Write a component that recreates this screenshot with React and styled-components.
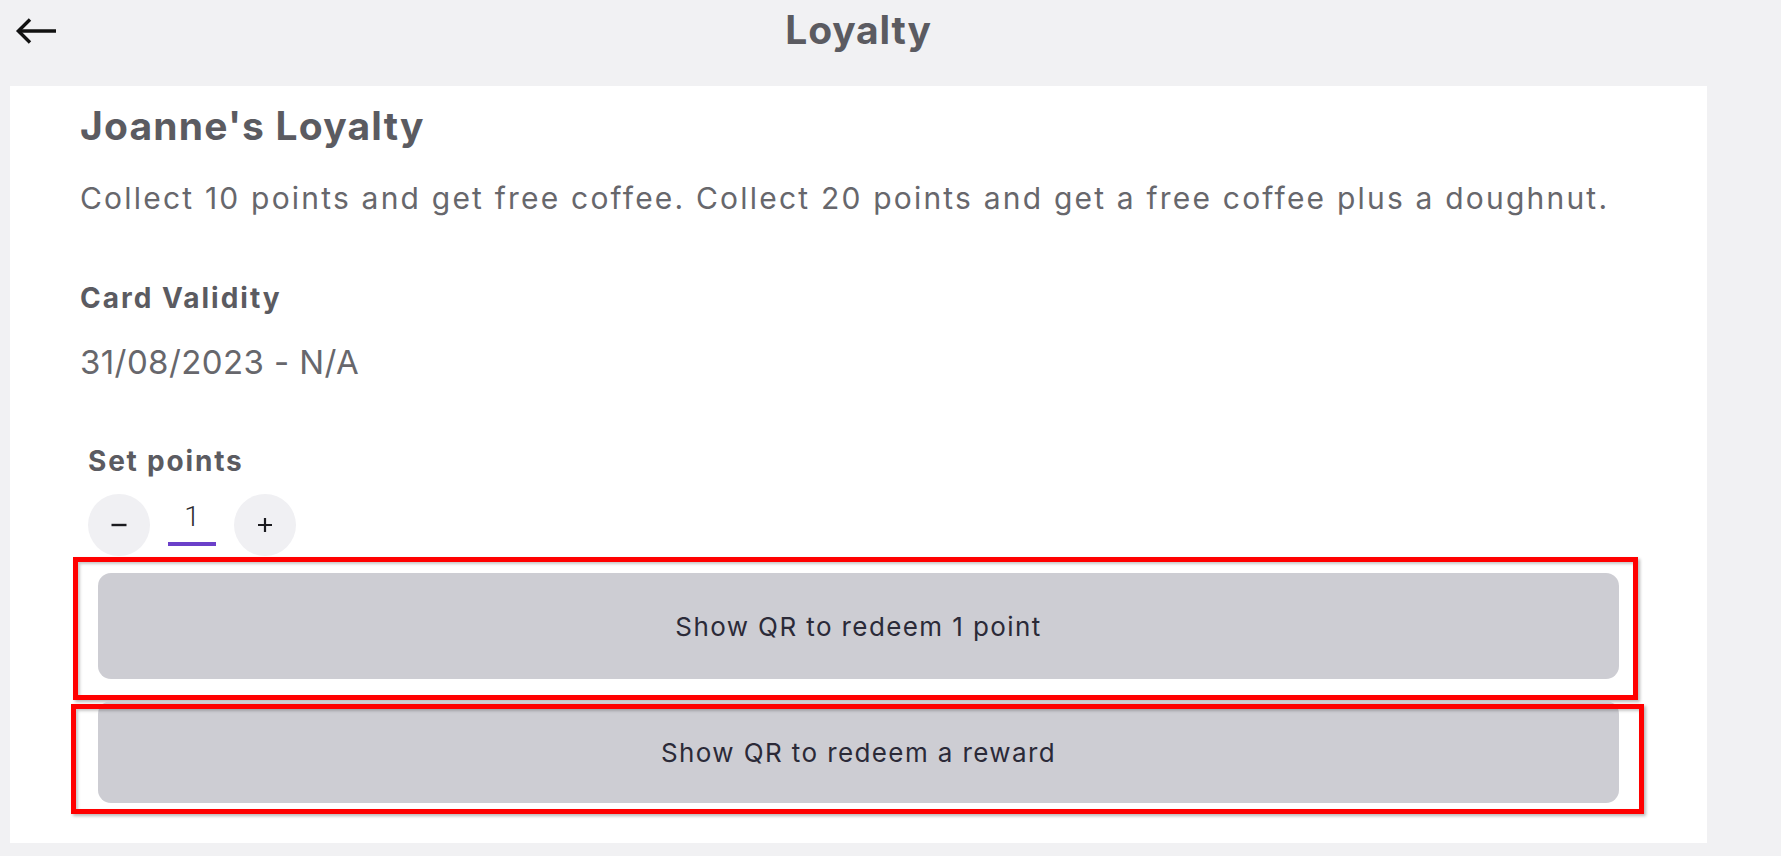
import React, { useState } from 'react';
import styled, { createGlobalStyle } from 'styled-components';

const GlobalStyle = createGlobalStyle`
  html, body {
    margin: 0;
    padding: 0;
    background: #f1f1f3;
  }
  body {
    font-family: Inter, "Noto Sans", Arial, sans-serif;
    -webkit-font-smoothing: antialiased;
  }
`;

const Page = styled.div`
  width: 1717px;
  height: 856px;
  display: flex;
  flex-direction: column;
`;

const Header = styled.header`
  height: 86px;
  display: grid;
  grid-template-columns: 1fr auto 1fr;
  align-items: start;
`;

const BackButton = styled.button`
  justify-self: start;
  margin: 17px 0 0 15px;
  padding: 0;
  border: none;
  background: none;
  color: #111;
  cursor: pointer;
  line-height: 0;
`;

const Title = styled.h1`
  margin: 4px 0 0;
  font-size: 39px;
  font-weight: 700;
  letter-spacing: 0.8px;
  color: #5b5b61;
  line-height: 52px;
`;

const Card = styled.main`
  margin: 0 10px;
  height: 757px;
  background: #fff;
  box-sizing: border-box;
  padding: 0 70px;
  display: flex;
  flex-direction: column;
`;

const CardTitle = styled.h2`
  margin: 14px 0 0;
  font-size: 39px;
  font-weight: 700;
  letter-spacing: 1.2px;
  color: #5b5b61;
  line-height: 52px;
`;

const Description = styled.p`
  margin: 26px 0 0;
  font-size: 30px;
  line-height: 40px;
  color: #67676c;
  letter-spacing: 2.2px;
  white-space: nowrap;
`;

const Label = styled.h3`
  margin: ${p => p.$top}px 0 0 ${p => p.$indent || 0}px;
  font-size: 28px;
  font-weight: 700;
  line-height: 36px;
  letter-spacing: ${p => p.$spacing}px;
  color: #5b5b61;
`;

const Value = styled.div`
  margin-top: 26px;
  font-size: 33px;
  line-height: 40px;
  letter-spacing: 0.4px;
  color: #67676c;
`;

const Stepper = styled.div`
  margin: 15px 0 0 8px;
  display: flex;
  align-items: center;
  gap: 18px;
`;

const RoundButton = styled.button`
  width: 62px;
  height: 62px;
  border-radius: 50%;
  border: none;
  background: #f0f0f3;
  display: flex;
  align-items: center;
  justify-content: center;
  color: #1b1b1f;
  padding: 0;
  cursor: pointer;
`;

const PointsInput = styled.input`
  width: 48px;
  height: 44px;
  margin-top: -2px;
  box-sizing: border-box;
  border: none;
  border-bottom: 4px solid #6b40c9;
  padding: 0 0 12px;
  text-align: center;
  font-family: Roboto, Inter, sans-serif;
  font-weight: 300;
  font-size: 28px;
  color: #2b2b30;
  background: transparent;
  outline: none;
`;

const Actions = styled.div`
  margin: 17px 18px 0;
  display: flex;
  flex-direction: column;
  gap: 22px;
`;

const ActionWrap = styled.div`
  position: relative;
`;

const ActionButton = styled.button`
  width: 100%;
  height: ${p => p.$h}px;
  border: none;
  border-radius: 13px;
  background: #cdcdd3;
  color: #2b2a38;
  font-family: Inter, "Noto Sans", sans-serif;
  font-size: 26px;
  letter-spacing: 1.4px;
  cursor: pointer;
`;

// red annotation frame drawn over a button
const Highlight = styled.span`
  position: absolute;
  top: ${p => p.$t}px;
  right: ${p => p.$r}px;
  bottom: ${p => p.$b}px;
  left: ${p => p.$l}px;
  border: 5px solid #ff0000;
  box-shadow: 2px 2px 3px rgba(0, 0, 0, 0.28), inset 2px 2px 3px rgba(0, 0, 0, 0.22);
  pointer-events: none;
`;

const ArrowLeft = () => (
  <svg width="42" height="28" viewBox="0 0 42 28" fill="none" stroke="currentColor" strokeWidth="3.4" strokeLinejoin="miter">
    <path d="M3 14 H41" />
    <path d="M15 2.5 L3.4 14 L15 25.5" />
  </svg>
);

const Minus = () => (
  <svg width="18" height="18" viewBox="0 0 18 18" stroke="currentColor" strokeWidth="2.4">
    <path d="M1.5 9 H16.5" />
  </svg>
);

const Plus = () => (
  <svg width="18" height="18" viewBox="0 0 18 18" stroke="currentColor" strokeWidth="2.2">
    <path d="M2 9 H16 M9 2 V16" />
  </svg>
);

export default function App() {
  const [points, setPoints] = useState(1);

  return (
    <>
      <GlobalStyle />
      <Page>
        <Header>
          <BackButton aria-label="Back"><ArrowLeft /></BackButton>
          <Title>Loyalty</Title>
          <div />
        </Header>
        <Card>
          <CardTitle>Joanne's Loyalty</CardTitle>
          <Description>
            Collect 10 points and get free coffee. Collect 20 points and get a free coffee plus a doughnut.
          </Description>
          <Label $top={62} $spacing={2}>Card Validity</Label>
          <Value>31/08/2023 - N/A</Value>
          <Label $top={61} $indent={8} $spacing={1.8}>Set points</Label>
          <Stepper>
            <RoundButton onClick={() => setPoints(Math.max(1, points - 1))}><Minus /></RoundButton>
            <PointsInput value={points} onChange={e => setPoints(e.target.value)} />
            <RoundButton onClick={() => setPoints(Number(points) + 1)}><Plus /></RoundButton>
          </Stepper>
          <Actions>
            <ActionWrap>
              <ActionButton $h={106}>Show QR to redeem {points} point</ActionButton>
              <Highlight $t={-16} $r={-19} $b={-21} $l={-25} />
            </ActionWrap>
            <ActionWrap>
              <ActionButton $h={102}>Show QR to redeem a reward</ActionButton>
              <Highlight $t={3} $r={-25} $b={-11} $l={-27} />
            </ActionWrap>
          </Actions>
        </Card>
      </Page>
    </>
  );
}
